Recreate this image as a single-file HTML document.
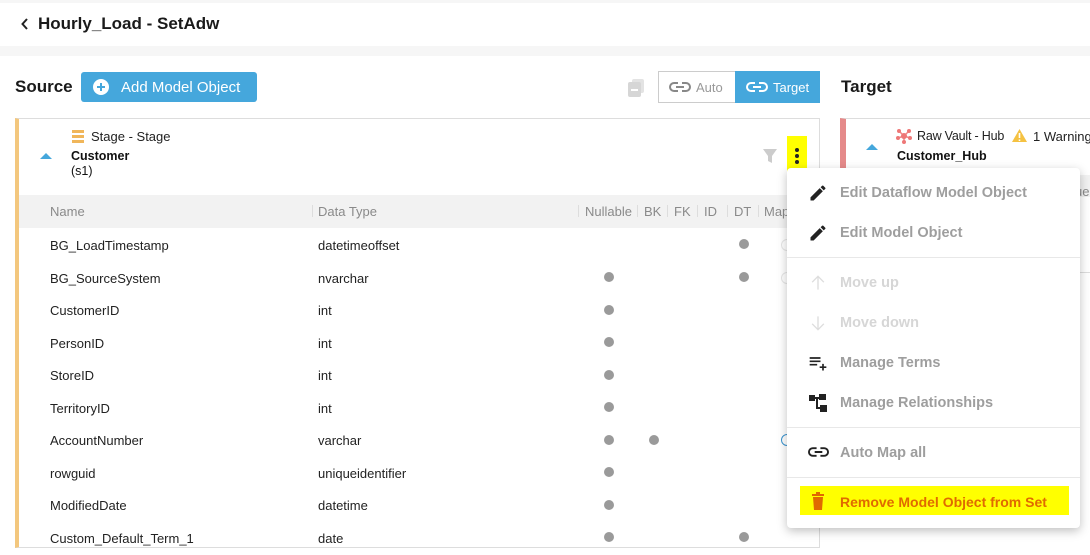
<!DOCTYPE html>
<html><head><meta charset="utf-8"><style>
*{box-sizing:border-box;margin:0;padding:0}
body{width:1090px;height:538px;overflow:hidden;background:#fff;font-family:"Liberation Sans",Arial,sans-serif;position:relative;color:#222}
.a{position:absolute}
.hdr{font-size:13px;color:#8a8a8a;top:204px}
.sep{position:absolute;top:205px;width:1px;height:12px;background:#ddd}
.row{position:absolute;left:16px;width:803px;height:32.5px;font-size:13px;color:#222}
.row span{position:absolute;top:9px}
.dot{position:absolute;width:10px;height:10px;border-radius:50%;background:#9a9a9a}
.mc{position:absolute;width:12px;height:12px;border-radius:50%;border:1.5px solid #e6e6e6}
.mi{position:absolute;left:840px;font-size:14.5px;font-weight:bold;color:#9e9e9e;letter-spacing:0}
.ic{position:absolute;left:808px}
.dv{position:absolute;left:787px;width:293px;height:1px;background:#e8e8e8}
</style></head><body>
<div class="a" style="left:0;top:0;width:1090px;height:3px;background:#f6f6f6"></div>
<div class="a" style="left:0;top:46px;width:1090px;height:10px;background:#f6f6f6"></div>
<svg class="a" style="left:20px;top:17px" width="10" height="14" viewBox="0 0 10 14"><path d="M7 2 L2.5 7 L7 12" fill="none" stroke="#222" stroke-width="2"/></svg>
<div class="a" style="left:38px;top:14px;font-size:17px;font-weight:bold;color:#1a1a1a">Hourly_Load - SetAdw</div>

<div class="a" style="left:15px;top:77px;font-size:17px;font-weight:bold;color:#1a1a1a">Source</div>
<div class="a" style="left:81px;top:72px;width:176px;height:30px;background:#45a7dc;border-radius:3px"></div>
<svg class="a" style="left:92px;top:78px" width="18" height="18" viewBox="0 0 18 18"><circle cx="9" cy="9" r="8" fill="#fff"/><path d="M9 5v8M5 9h8" stroke="#45a7dc" stroke-width="2"/></svg>
<div class="a" style="left:121px;top:79px;font-size:15px;color:#fff">Add Model Object</div>
<svg class="a" style="left:626px;top:78px" width="20" height="20" viewBox="0 0 20 20"><rect x="6" y="1" width="12" height="14" rx="2" fill="#e3e3e3"/><rect x="2" y="4" width="13" height="15" rx="2" fill="#d6d6d6"/><path d="M5 12h7" stroke="#fff" stroke-width="2"/></svg>
<div class="a" style="left:658px;top:71px;width:78px;height:32px;border:1px solid #ccc"></div>
<svg class="a" style="left:669px;top:81px" width="22" height="12" viewBox="0 0 22 12"><path d="M9 2H5a4 4 0 0 0 0 8h4M13 2h4a4 4 0 0 1 0 8h-4M7 6h8" fill="none" stroke="#888" stroke-width="2"/></svg>
<div class="a" style="left:696px;top:80px;font-size:13px;color:#999">Auto</div>
<div class="a" style="left:735px;top:71px;width:85px;height:32px;background:#45a7dc"></div>
<svg class="a" style="left:746px;top:81px" width="22" height="12" viewBox="0 0 22 12"><path d="M9 2H5a4 4 0 0 0 0 8h4M13 2h4a4 4 0 0 1 0 8h-4M7 6h8" fill="none" stroke="#fff" stroke-width="2"/></svg>
<div class="a" style="left:773px;top:80px;font-size:13px;color:#fff">Target</div>
<div class="a" style="left:841px;top:77px;font-size:17px;font-weight:bold;color:#1a1a1a">Target</div>

<!-- source card -->
<div class="a" style="left:15px;top:118px;width:805px;height:430px;border:1px solid #ddd;border-left:4px solid #f3c77e"></div>
<div class="a" style="left:72px;top:130px;width:12px;height:3px;background:#f0b65a;box-shadow:0 5px 0 #f0b65a,0 10px 0 #f0b65a"></div>
<div class="a" style="left:91px;top:129px;font-size:13px;color:#222">Stage - Stage</div>
<svg class="a" style="left:40px;top:152px" width="12" height="8"><path d="M0 7L6 1L12 7Z" fill="#45a7dc"/></svg>
<div class="a" style="left:71px;top:149px;font-size:12.5px;font-weight:bold;line-height:15px;color:#111">Customer<br><span style="font-weight:normal">(s1)</span></div>
<svg class="a" style="left:762px;top:148px" width="16" height="16" viewBox="0 0 16 16"><path d="M1 1h14l-5 7v7l-4-2V8z" fill="#ccc"/></svg>
<div class="a" style="left:787px;top:136px;width:20px;height:39px;background:#ffff00"></div>
<div class="a" style="left:795px;top:148px;width:4px;height:4px;border-radius:50%;background:#222;box-shadow:0 6px 0 #222,0 12px 0 #222"></div>

<div class="a" style="left:19px;top:195px;width:800px;height:33px;background:#f2f2f2"></div>
<div class="a hdr" style="left:50px">Name</div>
<div class="sep" style="left:312px"></div><div class="a hdr" style="left:318px">Data Type</div>
<div class="sep" style="left:578px"></div><div class="a hdr" style="left:585px">Nullable</div>
<div class="sep" style="left:637px"></div><div class="a hdr" style="left:644px">BK</div>
<div class="sep" style="left:667px"></div><div class="a hdr" style="left:674px">FK</div>
<div class="sep" style="left:697px"></div><div class="a hdr" style="left:704px">ID</div>
<div class="sep" style="left:727px"></div><div class="a hdr" style="left:734px">DT</div>
<div class="sep" style="left:758px"></div><div class="a hdr" style="left:764px">Map</div>

<div class="row" style="top:229px"><span style="left:34px">BG_LoadTimestamp</span><span style="left:302px">datetimeoffset</span></div>
<div class="row" style="top:262px"><span style="left:34px">BG_SourceSystem</span><span style="left:302px">nvarchar</span></div>
<div class="row" style="top:294px"><span style="left:34px">CustomerID</span><span style="left:302px">int</span></div>
<div class="row" style="top:327px"><span style="left:34px">PersonID</span><span style="left:302px">int</span></div>
<div class="row" style="top:359px"><span style="left:34px">StoreID</span><span style="left:302px">int</span></div>
<div class="row" style="top:392px"><span style="left:34px">TerritoryID</span><span style="left:302px">int</span></div>
<div class="row" style="top:424px"><span style="left:34px">AccountNumber</span><span style="left:302px">varchar</span></div>
<div class="row" style="top:457px"><span style="left:34px">rowguid</span><span style="left:302px">uniqueidentifier</span></div>
<div class="row" style="top:489px"><span style="left:34px">ModifiedDate</span><span style="left:302px">datetime</span></div>
<div class="row" style="top:522px"><span style="left:34px">Custom_Default_Term_1</span><span style="left:302px">date</span></div>

<div class="dot" style="left:739px;top:239px"></div>
<div class="dot" style="left:604px;top:272px"></div><div class="dot" style="left:739px;top:272px"></div>
<div class="dot" style="left:604px;top:305px"></div>
<div class="dot" style="left:604px;top:337px"></div>
<div class="dot" style="left:604px;top:370px"></div>
<div class="dot" style="left:604px;top:402px"></div>
<div class="dot" style="left:604px;top:435px"></div><div class="dot" style="left:649px;top:435px"></div>
<div class="dot" style="left:604px;top:467px"></div>
<div class="dot" style="left:604px;top:500px"></div>
<div class="dot" style="left:604px;top:532px"></div><div class="dot" style="left:739px;top:532px"></div>
<div class="mc" style="left:781px;top:239px"></div><div class="mc" style="left:781px;top:272px"></div>
<div class="mc" style="left:781px;top:434px;border-color:#3a94cf"></div>

<!-- target card -->
<div class="a" style="left:840px;top:118px;width:260px;height:155px;border:1px solid #ddd;border-left:6px solid #e58a8a"></div>
<div class="a" style="left:846px;top:175px;width:244px;height:22px;background:#f2f2f2"></div>
<div class="a" style="left:1075px;top:184px;font-size:13px;color:#8a8a8a">ue</div>
<svg class="a" style="left:866px;top:143px" width="12" height="8"><path d="M0 7L6 1L12 7Z" fill="#45a7dc"/></svg>
<svg class="a" style="left:896px;top:128px" width="16" height="16" viewBox="0 0 16 16"><g stroke="#e88" stroke-width="1.5"><path d="M8 8L3 3M8 8L13 3M8 8L2 10M8 8L14 10M8 8L8 14"/></g><g fill="#e77"><circle cx="8" cy="8" r="3"/><circle cx="3" cy="3" r="2"/><circle cx="13" cy="3" r="2"/><circle cx="2" cy="10" r="2"/><circle cx="14" cy="10" r="2"/><circle cx="8" cy="14" r="2"/></g></svg>
<div class="a" style="left:917px;top:129px;font-size:12.5px;color:#222;letter-spacing:-0.2px">Raw Vault - Hub</div>
<svg class="a" style="left:1012px;top:129px" width="15" height="13"><path d="M7.5 0L15 13H0Z" fill="#f5c242"/><path d="M7.5 4v5M7.5 10.5v1.5" stroke="#fff" stroke-width="1.6"/></svg>
<div class="a" style="left:1033px;top:129px;font-size:13px;color:#222;white-space:nowrap">1 Warning</div>
<div class="a" style="left:897px;top:149px;font-size:12.5px;font-weight:bold;color:#111">Customer_Hub</div>

<!-- menu -->
<div class="a" style="left:787px;top:168px;width:293px;height:360px;background:#fff;border-radius:4px;box-shadow:0 3px 10px rgba(0,0,0,.25)"></div>
<svg class="ic" style="top:183px" width="20" height="20" viewBox="0 0 24 24"><path d="M3 17.25V21h3.75L17.8 9.94l-3.75-3.75zM20.7 7.04a1 1 0 0 0 0-1.41l-2.34-2.34a1 1 0 0 0-1.41 0l-1.83 1.83 3.75 3.75z" fill="#222"/></svg>
<div class="mi" style="top:185px">Edit Dataflow Model Object</div>
<svg class="ic" style="top:223px" width="20" height="20" viewBox="0 0 24 24"><path d="M3 17.25V21h3.75L17.8 9.94l-3.75-3.75zM20.7 7.04a1 1 0 0 0 0-1.41l-2.34-2.34a1 1 0 0 0-1.41 0l-1.83 1.83 3.75 3.75z" fill="#222"/></svg>
<div class="mi" style="top:225px">Edit Model Object</div>
<div class="dv" style="top:257px"></div>
<svg class="ic" style="top:273px" width="20" height="20" viewBox="0 0 24 24"><path d="M12 20V4M5 11l7-7 7 7" fill="none" stroke="#ddd" stroke-width="1.6"/></svg>
<div class="mi" style="top:275px;color:#d6d6d6">Move up</div>
<svg class="ic" style="top:313px" width="20" height="20" viewBox="0 0 24 24"><path d="M12 4v16M5 13l7 7 7-7" fill="none" stroke="#ddd" stroke-width="1.6"/></svg>
<div class="mi" style="top:315px;color:#d6d6d6">Move down</div>
<svg class="ic" style="top:353px" width="20" height="20" viewBox="0 0 24 24"><path d="M2 6h13M2 10h13M2 14h9M14 17h8M18 13v8" stroke="#222" stroke-width="2" fill="none"/></svg>
<div class="mi" style="top:355px">Manage Terms</div>
<svg class="ic" style="top:393px" width="20" height="20" viewBox="0 0 20 20"><rect x="1" y="2" width="6" height="6" fill="#222"/><rect x="11" y="1" width="7" height="6" fill="#222"/><rect x="12" y="12" width="7" height="7" fill="#222"/><path d="M7 5h4M9 5v10h3" stroke="#222" stroke-width="2" fill="none"/></svg>
<div class="mi" style="top:395px">Manage Relationships</div>
<div class="dv" style="top:427px"></div>
<svg class="ic" style="top:446px" width="21" height="12" viewBox="0 0 22 12"><path d="M9 2H5a4 4 0 0 0 0 8h4M13 2h4a4 4 0 0 1 0 8h-4M7 6h8" fill="none" stroke="#222" stroke-width="2"/></svg>
<div class="mi" style="top:445px">Auto Map all</div>
<div class="dv" style="top:477px"></div>
<div class="a" style="left:800px;top:486px;width:269px;height:29px;background:#ffff00"></div>
<svg class="a" style="left:811px;top:492px" width="14" height="18" viewBox="0 0 14 18"><rect x="1" y="2" width="12" height="2" fill="#e06a00"/><rect x="5" y="0" width="4" height="2" fill="#e06a00"/><path d="M2 5h10l-1 13H3z" fill="#e06a00"/></svg>
<div class="mi" style="top:494px;color:#e06a00;font-size:14px">Remove Model Object from Set</div>
</body></html>
